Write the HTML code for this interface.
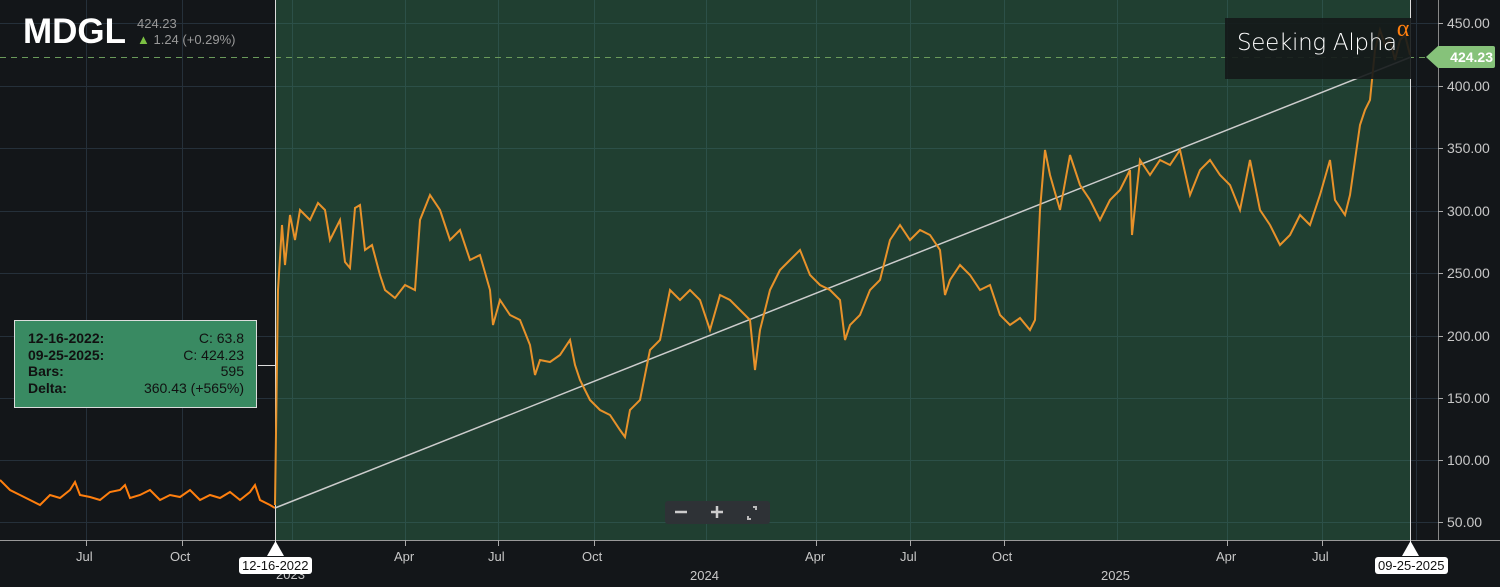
<!DOCTYPE html>
<html><head><meta charset="utf-8"><style>
body{margin:0;background:#131619;width:1500px;height:587px;overflow:hidden;font-family:"Liberation Sans",sans-serif;position:relative}
.t{position:absolute;color:#c8c8c8;font-size:13px}
</style></head><body>
<svg width="1500" height="587" style="position:absolute;left:0;top:0">
<rect x="275" y="0" width="1136" height="540" fill="#203f31"/>
<g stroke="#25303a" stroke-width="1">
<line x1="0" x2="275" y1="23.5" y2="23.5"/><line x1="0" x2="275" y1="86.5" y2="86.5"/><line x1="0" x2="275" y1="148.5" y2="148.5"/><line x1="0" x2="275" y1="211.5" y2="211.5"/><line x1="0" x2="275" y1="273.5" y2="273.5"/><line x1="0" x2="275" y1="336.5" y2="336.5"/><line x1="0" x2="275" y1="398.5" y2="398.5"/><line x1="0" x2="275" y1="460.5" y2="460.5"/><line x1="0" x2="275" y1="522.5" y2="522.5"/>
<line x1="1411" x2="1438" y1="23.5" y2="23.5"/><line x1="1411" x2="1438" y1="86.5" y2="86.5"/><line x1="1411" x2="1438" y1="148.5" y2="148.5"/><line x1="1411" x2="1438" y1="211.5" y2="211.5"/><line x1="1411" x2="1438" y1="273.5" y2="273.5"/><line x1="1411" x2="1438" y1="336.5" y2="336.5"/><line x1="1411" x2="1438" y1="398.5" y2="398.5"/><line x1="1411" x2="1438" y1="460.5" y2="460.5"/><line x1="1411" x2="1438" y1="522.5" y2="522.5"/>
<line x1="86.5" x2="86.5" y1="0" y2="540"/><line x1="182.5" x2="182.5" y1="0" y2="540"/><line x1="1416.5" x2="1416.5" y1="0" y2="540"/>
</g>
<g stroke="#2c5048" stroke-width="1">
<line x1="275" x2="1411" y1="23.5" y2="23.5"/><line x1="275" x2="1411" y1="86.5" y2="86.5"/><line x1="275" x2="1411" y1="148.5" y2="148.5"/><line x1="275" x2="1411" y1="211.5" y2="211.5"/><line x1="275" x2="1411" y1="273.5" y2="273.5"/><line x1="275" x2="1411" y1="336.5" y2="336.5"/><line x1="275" x2="1411" y1="398.5" y2="398.5"/><line x1="275" x2="1411" y1="460.5" y2="460.5"/><line x1="275" x2="1411" y1="522.5" y2="522.5"/>
<line x1="292.5" x2="292.5" y1="0" y2="540"/><line x1="405.5" x2="405.5" y1="0" y2="540"/><line x1="498.5" x2="498.5" y1="0" y2="540"/><line x1="594.5" x2="594.5" y1="0" y2="540"/><line x1="706.5" x2="706.5" y1="0" y2="540"/><line x1="816.5" x2="816.5" y1="0" y2="540"/><line x1="910.5" x2="910.5" y1="0" y2="540"/><line x1="1004.5" x2="1004.5" y1="0" y2="540"/><line x1="1117.5" x2="1117.5" y1="0" y2="540"/><line x1="1227.5" x2="1227.5" y1="0" y2="540"/><line x1="1322.5" x2="1322.5" y1="0" y2="540"/>
</g>
<line x1="0" x2="1438" y1="57.5" y2="57.5" stroke="#6a9a5a" stroke-dasharray="6,5"/>
<line x1="1438.5" x2="1438.5" y1="0" y2="540" stroke="#888"/>
<line x1="0" x2="1500" y1="540.5" y2="540.5" stroke="#999"/>
<line x1="275.5" x2="275.5" y1="0" y2="545" stroke="#ddd"/>
<line x1="1410.5" x2="1410.5" y1="0" y2="545" stroke="#ddd"/>
<line x1="258" x2="275" y1="365.5" y2="365.5" stroke="#ddd"/>
<polyline fill="none" stroke="#ff7f0e" stroke-width="2" points="0,480 10,490 20,495 30,500 40,505 50,495 60,498 70,490 75,482 80,495 90,497 100,500 110,492 120,490 125,485 130,498 140,495 150,490 160,500 170,495 180,497 190,490 200,500 210,495 220,498 230,492 240,500 250,492 255,485 260,500 270,505 275,508"/>
<line x1="275" y1="508" x2="1411" y2="57" stroke="#ccc" stroke-width="1.5"/>
<polyline fill="none" stroke="#e8922a" stroke-width="2" points="275,505 278,290 282,225 285,265 290,215 295,240 300,210 310,220 318,203 325,210 330,240 340,220 345,262 350,268 355,208 360,205 365,250 372,245 380,275 385,290 395,298 405,285 415,290 420,220 430,195 440,210 450,240 460,230 470,260 480,255 490,290 493,325 500,300 510,315 520,320 530,345 535,375 540,360 550,362 560,355 570,340 575,365 580,380 590,400 600,410 610,415 620,430 625,437 630,410 640,400 650,350 660,340 670,290 680,300 690,290 700,300 710,330 720,295 730,300 740,310 750,320 755,370 760,330 770,290 780,270 790,260 800,250 810,275 820,285 830,290 840,300 845,340 850,325 860,315 870,290 880,280 890,240 900,225 910,240 920,230 930,235 940,250 945,295 950,280 960,265 970,275 980,290 990,285 1000,315 1010,325 1020,318 1030,330 1035,320 1040,210 1045,150 1050,175 1060,210 1070,155 1080,185 1090,200 1100,220 1110,200 1120,190 1130,170 1132,235 1140,160 1150,175 1160,160 1170,165 1180,150 1190,195 1200,170 1210,160 1220,175 1230,185 1240,210 1250,160 1260,210 1270,225 1280,245 1290,235 1300,215 1310,225 1320,195 1330,160 1335,200 1345,215 1350,195 1355,160 1360,125 1365,110 1370,100 1375,50 1380,30 1385,45 1390,40 1395,60 1400,40 1405,35 1410,55"/>
<g stroke="#aaa"><line x1="1438" x2="1443" y1="23.5" y2="23.5"/><line x1="1438" x2="1443" y1="86.5" y2="86.5"/><line x1="1438" x2="1443" y1="148.5" y2="148.5"/><line x1="1438" x2="1443" y1="211.5" y2="211.5"/><line x1="1438" x2="1443" y1="273.5" y2="273.5"/><line x1="1438" x2="1443" y1="336.5" y2="336.5"/><line x1="1438" x2="1443" y1="398.5" y2="398.5"/><line x1="1438" x2="1443" y1="460.5" y2="460.5"/><line x1="1438" x2="1443" y1="522.5" y2="522.5"/>
<line x1="86.5" x2="86.5" y1="540" y2="546"/><line x1="182.5" x2="182.5" y1="540" y2="546"/><line x1="405.5" x2="405.5" y1="540" y2="546"/><line x1="498.5" x2="498.5" y1="540" y2="546"/><line x1="594.5" x2="594.5" y1="540" y2="546"/><line x1="816.5" x2="816.5" y1="540" y2="546"/><line x1="910.5" x2="910.5" y1="540" y2="546"/><line x1="1004.5" x2="1004.5" y1="540" y2="546"/><line x1="1227.5" x2="1227.5" y1="540" y2="546"/><line x1="1322.5" x2="1322.5" y1="540" y2="546"/></g>
<rect x="1225" y="18" width="186" height="61" fill="rgba(20,24,26,0.9)"/>
<path d="M1426 57 L1438 46 L1493 46 Q1495 46 1495 48 L1495 66 Q1495 68 1493 68 L1438 68 Z" fill="#86c27a"/>
<path d="M275.5 541 L284 556 L267 556 Z" fill="#fff"/>
<path d="M1410.5 541 L1419 556 L1402 556 Z" fill="#fff"/>
<rect x="14.5" y="320.5" width="242" height="87" fill="#398a62" stroke="#ddd"/>
<rect x="665" y="501" width="105" height="23" rx="3" fill="#2e3236"/>
<g stroke="#ccc" stroke-width="2.5"><line x1="675" x2="687" y1="512" y2="512"/><line x1="711" x2="723" y1="512" y2="512"/><line x1="717" x2="717" y1="506" y2="518"/></g>
<path d="M748 516 v3 h3 M756 510 v-3 h-3" stroke="#bbb" stroke-width="2" fill="none"/>
</svg>
<div class="t" style="left:23px;top:12px;font-size:35px;font-weight:bold;color:#fff">MDGL</div>
<div class="t" style="left:137px;top:16px;color:#999;font-size:13px">424.23</div>
<div class="t" style="left:137px;top:32px;color:#999;font-size:13px"><span style="color:#7bc043">&#9650;</span> 1.24 (+0.29%)</div>
<div class="t" style="left:1237px;top:30px;font-family:'DejaVu Sans',sans-serif;font-weight:300;font-size:23px;color:#fff;letter-spacing:-0.3px">Seeking Alpha<span style="color:#ff7f0e;font-size:24px;position:relative;top:-14px;font-family:'Liberation Serif',serif">α</span></div>
<div class="t" style="left:1438px;top:49px;width:55px;text-align:right;color:#fff;font-size:14px;font-weight:bold">424.23</div>
<div style="position:absolute;left:28px;top:330px;width:216px;font-size:14px;line-height:16.5px;color:#111">
<div style="display:flex;justify-content:space-between"><b>12-16-2022:</b><span>C: 63.8</span></div>
<div style="display:flex;justify-content:space-between"><b>09-25-2025:</b><span>C: 424.23</span></div>
<div style="display:flex;justify-content:space-between"><b>Bars:</b><span>595</span></div>
<div style="display:flex;justify-content:space-between"><b>Delta:</b><span>360.43 (+565%)</span></div>
</div>
<div class="t" style="left:1447px;top:15px;font-size:14px">450.00</div>
<div class="t" style="left:1447px;top:78px;font-size:14px">400.00</div>
<div class="t" style="left:1447px;top:140px;font-size:14px">350.00</div>
<div class="t" style="left:1447px;top:203px;font-size:14px">300.00</div>
<div class="t" style="left:1447px;top:265px;font-size:14px">250.00</div>
<div class="t" style="left:1447px;top:328px;font-size:14px">200.00</div>
<div class="t" style="left:1447px;top:390px;font-size:14px">150.00</div>
<div class="t" style="left:1447px;top:452px;font-size:14px">100.00</div>
<div class="t" style="left:1447px;top:514px;font-size:14px">50.00</div>
<div class="t" style="left:76px;top:549px">Jul</div>
<div class="t" style="left:170px;top:549px">Oct</div>
<div class="t" style="left:276px;top:567px">2023</div>
<div class="t" style="left:394px;top:549px">Apr</div>
<div class="t" style="left:488px;top:549px">Jul</div>
<div class="t" style="left:582px;top:549px">Oct</div>
<div class="t" style="left:690px;top:568px">2024</div>
<div class="t" style="left:805px;top:549px">Apr</div>
<div class="t" style="left:900px;top:549px">Jul</div>
<div class="t" style="left:992px;top:549px">Oct</div>
<div class="t" style="left:1101px;top:568px">2025</div>
<div class="t" style="left:1216px;top:549px">Apr</div>
<div class="t" style="left:1312px;top:549px">Jul</div>
<div style="position:absolute;left:239px;top:557px;background:#fff;border-radius:3px;padding:1px 3px;font-size:13px;color:#111">12-16-2022</div>
<div style="position:absolute;left:1375px;top:557px;background:#fff;border-radius:3px;padding:1px 3px;font-size:13px;color:#111">09-25-2025</div>
</body></html>
